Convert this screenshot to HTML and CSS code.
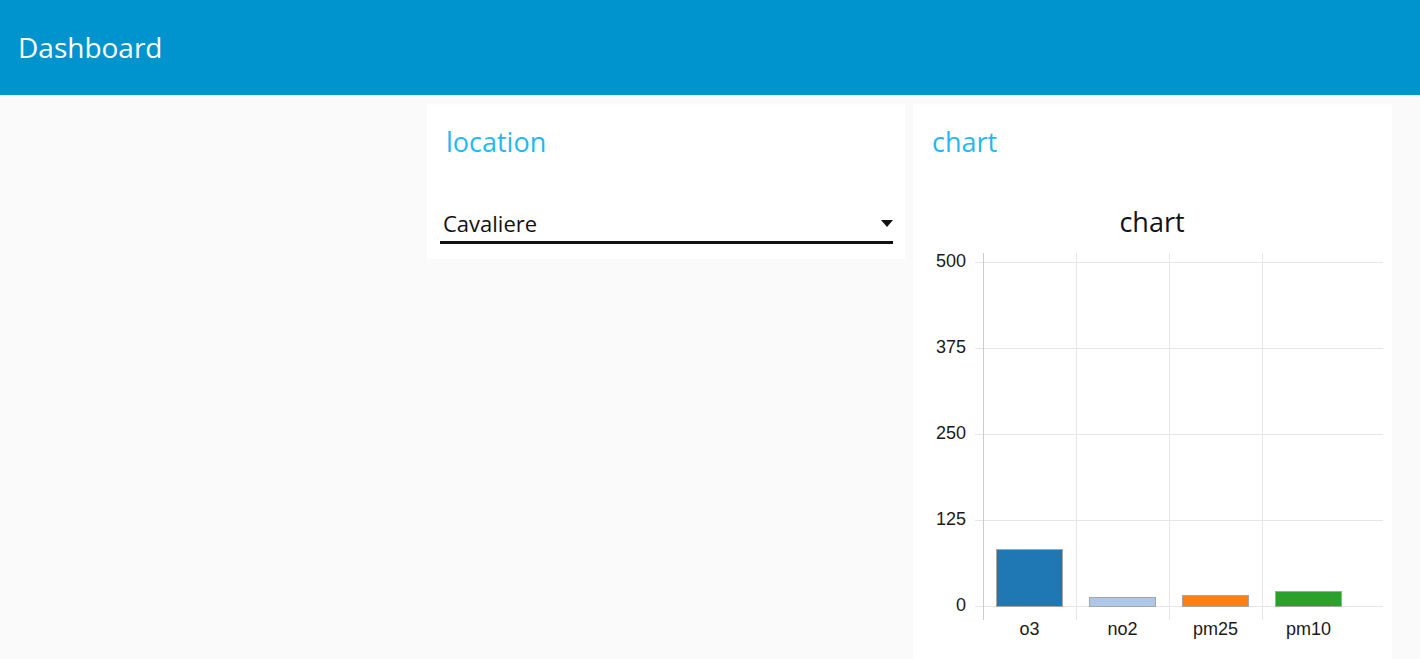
FILE: index.html
```html
<!DOCTYPE html>
<html>
<head>
<meta charset="utf-8">
<link rel="stylesheet" href="styles.css">
</head>
<body>
<header class="toolbar"><span class="toolbar-title">Dashboard</span></header>
<main class="content">
  <section class="card card-location">
    <h2 class="card-title">location</h2>
    <div class="select">
      <span class="select-value">Cavaliere</span>
      <span class="select-arrow"></span>
    </div>
  </section>
  <section class="card card-chart">
    <h2 class="card-title">chart</h2>
    <svg class="chart" width="479" height="470" viewBox="0 0 479 470">
      <text class="chart-title" x="239" y="42" text-anchor="middle">chart</text>
      <g class="grid">
        <line x1="62" y1="72.5" x2="470" y2="72.5"/>
        <line x1="62" y1="158.5" x2="470" y2="158.5"/>
        <line x1="62" y1="244.5" x2="470" y2="244.5"/>
        <line x1="62" y1="330.5" x2="470" y2="330.5"/>
        <line x1="62" y1="416.5" x2="470" y2="416.5"/>
        <line x1="163.5" y1="63" x2="163.5" y2="430"/>
        <line x1="256.5" y1="63" x2="256.5" y2="430"/>
        <line x1="349.5" y1="63" x2="349.5" y2="430"/>
      </g>
      <line class="axis" x1="70.5" y1="63" x2="70.5" y2="430"/>
      <g class="ylabels">
        <text x="53" y="77">500</text>
        <text x="53" y="163">375</text>
        <text x="53" y="249">250</text>
        <text x="53" y="335">125</text>
        <text x="53" y="421">0</text>
      </g>
      <g class="bars">
        <rect x="83.5" y="359.5" width="66" height="57" fill="#1f77b4"/>
        <rect x="176.5" y="407.5" width="66" height="9" fill="#aec7e8"/>
        <rect x="269.5" y="405.5" width="66" height="11" fill="#ff7f0e"/>
        <rect x="362.5" y="401.5" width="66" height="15" fill="#2ca02c"/>
      </g>
      <g class="xlabels">
        <text x="116.5" y="445">o3</text>
        <text x="209.5" y="445">no2</text>
        <text x="302.5" y="445">pm25</text>
        <text x="395.5" y="445">pm10</text>
      </g>
    </svg>
  </section>
</main>
</body>
</html>
```

FILE: styles.css
```css
html, body {
  margin: 0;
  padding: 0;
  height: 100%;
  overflow: hidden;
}
body {
  background: #fafafa;
  font-family: "Open Sans", "Noto Sans", sans-serif;
}
.toolbar {
  height: 95px;
  background: #0094ce;
  display: flex;
  align-items: center;
  padding-left: 18px;
  box-sizing: border-box;
}
.toolbar-title {
  color: #ffffff;
  font-size: 28px;
  line-height: 1;
  margin-top: -2px;
}
.content {
  display: flex;
  align-items: flex-start;
  gap: 8px;
  padding: 9px 0 0 427px;
}
.card {
  background: #ffffff;
  box-sizing: border-box;
}
.card-location {
  width: 478px;
  height: 155px;
  padding: 0 12px 0 13px;
}
.card-chart {
  width: 479px;
  height: 570px;
}
.card-title {
  margin: 0;
  font-weight: normal;
  font-size: 27px;
  line-height: 36px;
  padding-top: 20px;
  color: #1fb9f1;
}
.card-location .card-title {
  padding-left: 6px;
}
.card-chart .card-title {
  padding-left: 19px;
}
.select {
  margin-top: 44px;
  height: 37px;
  border-bottom: 3px solid #111111;
  display: flex;
  align-items: center;
  justify-content: space-between;
  padding: 0 0 0 3px;
}
.select-value {
  font-size: 22px;
  color: #111111;
  line-height: 1;
  margin-top: 0;
}
.select-arrow {
  width: 0;
  height: 0;
  border-left: 6.5px solid transparent;
  border-right: 6.5px solid transparent;
  border-top: 7px solid #111111;
  margin-top: 2px;
}
.chart {
  display: block;
  margin-top: 30px;
}
.chart-title {
  font-family: "Open Sans", "Noto Sans", sans-serif;
  font-size: 27px;
  fill: #111111;
}
.grid line {
  stroke: #e6e6e6;
  stroke-width: 1;
}
.axis {
  stroke: #cccccc;
  stroke-width: 1;
}
.ylabels text {
  font-family: "Liberation Sans", Arial, sans-serif;
  font-size: 18px;
  fill: #1a1a1a;
  text-anchor: end;
}
.xlabels text {
  font-family: "Liberation Sans", Arial, sans-serif;
  font-size: 18px;
  fill: #1a1a1a;
  text-anchor: middle;
}
.bars rect {
  stroke: #a6a6a6;
  stroke-width: 1;
}
```
